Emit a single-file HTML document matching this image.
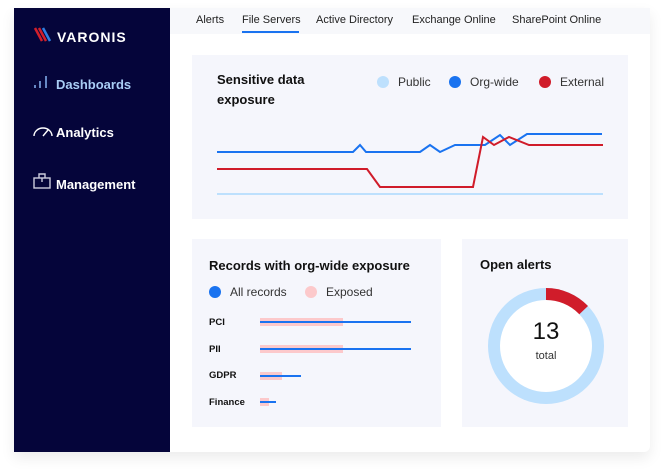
<!DOCTYPE html>
<html><head><meta charset="utf-8"><style>
*{margin:0;padding:0;box-sizing:border-box}
body{width:663px;height:473px;background:#fff;font-family:"Liberation Sans",sans-serif;position:relative;overflow:hidden}
.card{position:absolute;left:14px;top:8px;width:636px;height:444px;background:#fff;border-radius:0 0 6px 0;box-shadow:0 6px 14px rgba(0,0,0,0.08)}
.side{position:absolute;left:14px;top:8px;width:156px;height:444px;background:#05053a}
.tabs{position:absolute;left:170px;top:8px;width:480px;height:26px;background:#f7f8fb}
.tab{position:absolute;top:14px;font-size:11px;color:#222}
.panel{position:absolute;background:#f5f6fc}
.nav{position:absolute;left:56px;font-size:13px;font-weight:bold;color:#fff}
.b{font-weight:bold;color:#111}
.lg{position:absolute;font-size:12px;color:#333}
.dot{position:absolute;width:12px;height:12px;border-radius:50%}
.lbl{position:absolute;left:209px;font-size:9.5px;font-weight:bold;color:#111}
</style></head><body>
<div class="card"></div>
<div class="side"></div>
<svg style="position:absolute;left:33px;top:27px" width="20" height="16"><path d="M2 1 L9 14" stroke="#d21f2b" stroke-width="2.5"/><path d="M6 1 L13 14" stroke="#d21f2b" stroke-width="2.5"/><path d="M10 1 L17 14" stroke="#2f7fe0" stroke-width="2.5"/></svg>
<div style="position:absolute;left:57px;top:29px;font-size:14px;font-weight:bold;color:#fff;letter-spacing:1px">VARONIS</div>
<svg style="position:absolute;left:33px;top:74px" width="16" height="16"><path d="M2 14V11M7 14V7M13 14V2" stroke="#7fa9e6" stroke-width="1.6"/></svg>
<div class="nav" style="top:77px;color:#a9cdf5">Dashboards</div>
<svg style="position:absolute;left:32px;top:124px" width="22" height="14"><path d="M2 12 A9 8 0 0 1 20 12" fill="none" stroke="#fff" stroke-width="1.4"/><path d="M11 12 L16 6" stroke="#fff" stroke-width="1.4"/></svg>
<div class="nav" style="top:125px">Analytics</div>
<svg style="position:absolute;left:33px;top:173px" width="18" height="16"><rect x="1" y="5" width="16" height="10" fill="none" stroke="#ccd" stroke-width="1.4"/><path d="M6 5V1H12V5M9 5V9" fill="none" stroke="#ccd" stroke-width="1.4"/></svg>
<div class="nav" style="top:177px">Management</div>
<div class="tabs"></div>
<div class="tab" style="left:196px">Alerts</div>
<div class="tab" style="left:242px">File Servers</div>
<div style="position:absolute;left:242px;top:31px;width:57px;height:2px;background:#1a73f0"></div>
<div class="tab" style="left:316px">Active Directory</div>
<div class="tab" style="left:412px">Exchange Online</div>
<div class="tab" style="left:512px">SharePoint Online</div>
<div class="panel" style="left:192px;top:55px;width:436px;height:164px"></div>
<div class="b" style="position:absolute;left:217px;top:70px;font-size:13px;line-height:20px">Sensitive data<br>exposure</div>
<div class="dot" style="left:377px;top:76px;background:#bde0fd"></div><div class="lg" style="left:398px;top:75px">Public</div>
<div class="dot" style="left:449px;top:76px;background:#1a73f0"></div><div class="lg" style="left:470px;top:75px">Org-wide</div>
<div class="dot" style="left:539px;top:76px;background:#d01c2a"></div><div class="lg" style="left:560px;top:75px">External</div>
<svg style="position:absolute;left:0;top:0" width="663" height="473">
<path d="M217 194H603" stroke="#bde0fd" stroke-width="2"/>
<polyline fill="none" stroke="#1a73f0" stroke-width="2" points="217,152 353,152 360,145 366,152 420,152 430,145 440,152 455,145 485,145 500,135 510,145 527,134 602,134"/>
<polyline fill="none" stroke="#d01c2a" stroke-width="2" points="217,169 367,169 380,187 473,187 483,137 494,145 509,137 529,145 603,145"/>
</svg>
<div class="panel" style="left:192px;top:239px;width:249px;height:188px"></div>
<div class="b" style="position:absolute;left:209px;top:258px;font-size:13px">Records with org-wide exposure</div>
<div class="dot" style="left:209px;top:286px;background:#1a73f0"></div><div class="lg" style="left:230px;top:285px">All records</div>
<div class="dot" style="left:305px;top:286px;background:#fcc9cb"></div><div class="lg" style="left:326px;top:285px">Exposed</div>
<div class="lbl" style="top:317px">PCI</div><div class="lbl" style="top:344px">PII</div><div class="lbl" style="top:370px">GDPR</div><div class="lbl" style="top:397px">Finance</div>
<svg style="position:absolute;left:0;top:0" width="663" height="473">
<rect x="260" y="318" width="83" height="8" fill="#fcc9cb"/><path d="M260 322H411" stroke="#1a73f0" stroke-width="2"/>
<rect x="260" y="345" width="83" height="8" fill="#fcc9cb"/><path d="M260 349H411" stroke="#1a73f0" stroke-width="2"/>
<rect x="260" y="372" width="22" height="8" fill="#fcc9cb"/><path d="M260 376H301" stroke="#1a73f0" stroke-width="2"/>
<rect x="260" y="398" width="9" height="8" fill="#fcc9cb"/><path d="M260 402H276" stroke="#1a73f0" stroke-width="2"/>
</svg>
<div class="panel" style="left:462px;top:239px;width:166px;height:188px"></div>
<div class="b" style="position:absolute;left:480px;top:257px;font-size:13px">Open alerts</div>
<svg style="position:absolute;left:0;top:0" width="663" height="473">
<circle cx="546" cy="346" r="58" fill="#bde0fd"/>
<path d="M546 346 L546 288 A58 58 0 0 1 588 306 Z" fill="#d01c2a"/>
<circle cx="546" cy="346" r="46" fill="#fff"/>
</svg>
<div style="position:absolute;left:516px;top:318px;width:60px;text-align:center;font-size:24px;color:#111">13</div>
<div style="position:absolute;left:516px;top:350px;width:60px;text-align:center;font-size:11px;color:#333">total</div>
</body></html>
